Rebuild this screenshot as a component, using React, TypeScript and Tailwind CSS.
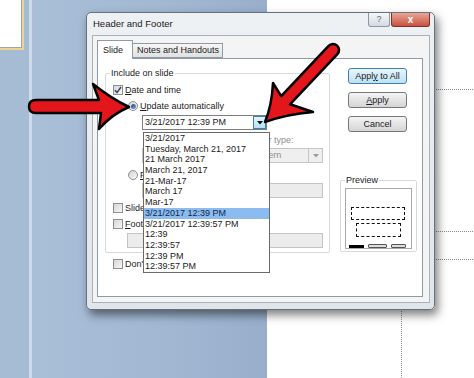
import React from 'react'

function CheckBox({ checked = false }: { checked?: boolean }) {
  return (
    <span className="flex h-[10px] w-[10px] shrink-0 items-center justify-center border border-[#8f8f8f] bg-gradient-to-br from-[#d6d6d6] to-[#f7f7f7]">
      {checked && (
        <svg width="8" height="8" viewBox="0 0 8 8">
          <path d="M1 4.2 L3 6.6 L7 1" fill="none" stroke="#34466a" strokeWidth="1.5" />
        </svg>
      )}
    </span>
  )
}

function Radio({ checked = false }: { checked?: boolean }) {
  return (
    <span className="flex h-[10px] w-[10px] shrink-0 items-center justify-center rounded-full border border-[#8f8f8f] bg-gradient-to-br from-[#d4d4d4] to-[#f8f8f8]">
      {checked && <span className="h-[5px] w-[5px] rounded-full bg-gradient-to-br from-[#1d4a80] to-[#74a8d8]" />}
    </span>
  )
}

function Button({ children, primary = false }: { children: React.ReactNode; primary?: boolean }) {
  return (
    <div
      className={`flex h-[16px] w-[59px] items-center justify-center rounded-[3px] border leading-none ${
        primary ? 'border-[#3c7fb1] bg-gradient-to-b from-[#e8f6fd] to-[#bde1f4]' : 'border-[#777777] bg-gradient-to-b from-[#f4f4f4] to-[#d5d5d5]'
      }`}
    >
      {children}
    </div>
  )
}

const formats = [
  '3/21/2017',
  'Tuesday, March 21, 2017',
  '21 March 2017',
  'March 21, 2017',
  '21-Mar-17',
  'March 17',
  'Mar-17',
  '3/21/2017 12:39 PM',
  '3/21/2017 12:39:57 PM',
  '12:39',
  '12:39:57',
  '12:39 PM',
  '12:39:57 PM',
]

function DateList() {
  return (
    <div className="absolute left-0 top-[16px] z-20 w-[127px] border border-[#6a6a6a] bg-white">
      {formats.map((f, i) => (
        <div key={f} className={`h-[10.7px] whitespace-nowrap pl-[1px] leading-[10.7px] ${i === 7 ? 'bg-[#8cbbef] text-[#10284a]' : ''}`}>
          {f}
        </div>
      ))}
    </div>
  )
}

function IncludeGroup() {
  return (
    <div className="relative flex h-[180px] w-[225px] flex-col rounded-[2px] border border-[#d3dae2] pl-[7px] pt-[11px]">
      <span className="absolute -top-[6px] left-[4px] bg-white px-[1px] leading-[11px]">Include on slide</span>

      <div className="flex h-[10px] items-center gap-[2px]">
        <CheckBox checked />
        <span>
          <span className="underline">D</span>ate and time
        </span>
      </div>

      <div className="mt-[6px] flex h-[10px] items-center gap-[2px] pl-[15px]">
        <Radio checked />
        <span>
          <span className="underline">U</span>pdate automatically
        </span>
      </div>

      <div className="relative ml-[29px] mt-[4px] flex h-[15px] w-[125px] items-center border border-[#7d7d7d] bg-white">
        <span className="pl-[2px]">3/21/2017 12:39 PM</span>
        <span className="ml-auto flex h-[13px] w-[13px] items-center justify-center border border-[#3c7fb1] bg-gradient-to-b from-[#e5f4fc] to-[#b9dff4]">
          <svg width="6" height="4" viewBox="0 0 6 4">
            <path d="M0 0 L6 0 L3 3.5 Z" fill="#111" />
          </svg>
        </span>
        <DateList />
      </div>

      <div className="mt-[5px] flex">
        <div className="ml-[29px] flex w-[90px] flex-col">
          <span className="h-[10px]" />
          <div className="mt-[3px] h-[15px] border border-[#c4c4c4] bg-[#efefef]" />
        </div>
        <div className="ml-[3px] flex flex-col">
          <span className="h-[10px] whitespace-nowrap leading-[10px] text-[#8e8e8e]">Calendar type:</span>
          <div className="ml-[9px] mt-[3px] flex h-[15px] w-[79px] items-center border border-[#c4c4c4] bg-[#efefef]">
            <span className="pl-[3px] text-[#8e8e8e]">Western</span>
            <span className="ml-auto flex h-full w-[14px] items-center justify-center border-l border-[#c4c4c4]">
              <svg width="6" height="4" viewBox="0 0 6 4">
                <path d="M0 0 L6 0 L3 3.5 Z" fill="#9a9a9a" />
              </svg>
            </span>
          </div>
        </div>
      </div>

      <div className="mt-[7px] flex h-[10px] items-center gap-[2px] pl-[15px]">
        <Radio />
        <span>
          <span className="underline">F</span>ixed
        </span>
      </div>

      <div className="ml-[29px] mt-[3px] h-[15px] w-[181px] border border-[#c4c4c4] bg-[#ececec]" />

      <div className="mt-[5px] flex h-[10px] items-center gap-[2px]">
        <CheckBox />
        <span>
          Slide <span className="underline">n</span>umber
        </span>
      </div>

      <div className="mt-[6px] flex h-[10px] items-center gap-[2px]">
        <CheckBox />
        <span>
          <span className="underline">F</span>ooter
        </span>
      </div>

      <div className="ml-[14px] mt-[4px] h-[15px] w-[196px] border border-[#c4c4c4] bg-[#ececec]" />
    </div>
  )
}

function PreviewGroup() {
  return (
    <div className="relative mt-[48px] flex h-[72px] w-[77px] flex-col rounded-[2px] border border-[#d3dae2] pl-[4px] pt-[7px]">
      <span className="absolute -top-[6px] left-[4px] bg-white px-[1px] leading-[11px]">Preview</span>
      <div className="flex h-[61px] w-[67px] flex-col border border-[#a9a9a9] bg-white pt-[18px]">
        <div className="ml-[5px] h-[13px] w-[54px] border border-dashed border-[#111]" />
        <div className="ml-[10px] mt-[3px] h-[14px] w-[45px] border border-dashed border-[#111]" />
        <div className="ml-[3px] mt-[7px] flex items-center gap-[4px]">
          <span className="h-[3px] w-[15px] bg-black" />
          <span className="h-[4px] w-[19px] rounded-[1px] border border-[#555] bg-[#dedede]" />
          <span className="h-[4px] w-[15px] rounded-[1px] border border-[#555] bg-[#dedede]" />
        </div>
      </div>
    </div>
  )
}

function Dialog() {
  return (
    <div className="absolute left-[86px] top-[12px] flex h-[298px] w-[349px] flex-col rounded-[5px] border border-[#66717e] bg-gradient-to-b from-[#eef1f4] to-[#e0e5ea] shadow-[3px_5px_10px_rgba(0,0,0,0.5)]">
      <div className="flex h-[22px] shrink-0 items-start justify-between pl-[6px] pr-[4px]">
        <span className="mt-[5px] text-[9.5px] leading-[12px]">Header and Footer</span>
        <div className="flex gap-[1px]">
          <div className="flex h-[14px] w-[22px] items-center justify-center rounded-b-[3px] border border-t-0 border-[#8c97a4] bg-gradient-to-b from-[#f6f7f9] to-[#d5dbe2] text-[9px] text-[#5a6676]">
            ?
          </div>
          <div className="flex h-[14px] w-[39px] items-center justify-center rounded-b-[3px] border border-t-0 border-[#7e3328] bg-gradient-to-b from-[#e9a597] to-[#c8503f] text-[10px] font-bold text-white">
            x
          </div>
        </div>
      </div>

      <div className="mb-[6px] ml-[5px] mr-[4px] flex flex-1 flex-col border border-[#aab3bd] bg-[#f4f4f4] pb-[5px] pl-[4px] pr-[6px] pt-[4px]">
        <div className="flex h-[18px] shrink-0 items-end">
          <div className="relative z-10 -mb-px flex h-[19px] w-[36px] items-center border border-b-0 border-[#8e9aa6] bg-white pl-[5px]">
            Slide
          </div>
          <div className="flex h-[15px] w-[90px] items-center border border-l-0 border-[#8e9aa6] bg-gradient-to-b from-[#f6f6f6] to-[#e1e1e1] pl-[4px]">
            Notes and Handouts
          </div>
        </div>

        <div className="flex flex-1 border border-[#8e9aa6] bg-white">
          <div className="ml-[7px] mt-[14px] flex flex-col">
            <IncludeGroup />
            <div className="ml-[8px] mt-[6px] flex h-[10px] items-center gap-[2px]">
              <CheckBox />
              <span>
                Don't <span className="underline">s</span>how on title slide
              </span>
            </div>
          </div>
          <div className="ml-[10px] flex flex-col">
            <div className="ml-[8px] mt-[9px] flex flex-col gap-[8px]">
              <Button primary>
                <span>
                  Appl<span className="underline">y</span> to All
                </span>
              </Button>
              <Button>
                <span>
                  <span className="underline">A</span>pply
                </span>
              </Button>
              <Button>Cancel</Button>
            </div>
            <PreviewGroup />
          </div>
        </div>
      </div>
    </div>
  )
}

function Arrows() {
  return (
    <svg className="pointer-events-none absolute left-0 top-0 z-30" width="474" height="378" viewBox="0 0 474 378">
      <path
        d="M36 100 L99 100 L93 84 Q112 99 129 107 Q112 114 99 129 L101 113 L36 113 Q29 113 29 106.5 Q29 100 36 100 Z"
        fill="#e3161c"
        stroke="#000"
        strokeWidth="2.5"
        strokeLinejoin="round"
      />
      <path
        d="M328.6 45.9 L281.2 96.1 L273 83 Q271.9 105.2 265 122 Q286.1 114.3 313 112 L290 104.3 L337.4 54.1 A6 6 0 0 0 328.6 45.9 Z"
        fill="#e3161c"
        stroke="#000"
        strokeWidth="2.5"
        strokeLinejoin="round"
      />
    </svg>
  )
}

export default function App() {
  return (
    <div className="relative flex h-[378px] w-[474px] overflow-hidden bg-white font-['Liberation_Sans',Arial,sans-serif] text-[9px] leading-none text-[#1b1b1b]">
      <div className="flex h-full w-[267px] shrink-0 bg-[#a6bbd4]">
        <div className="w-[29px] shrink-0">
          <div className="h-[50px] w-[24px] border-b-2 border-r-2 border-[#efd48f]">
            <div className="h-full w-full border-b border-r border-[#9ba5b0] bg-white" />
          </div>
        </div>
        <div className="w-[3px] shrink-0 bg-[#cfdbe8]" />
        <div className="flex-1 bg-gradient-to-r from-[#a9bed7] via-[#a3b9d3] to-[#98aecb]" />
      </div>

      <div className="relative flex-1">
        <div className="absolute left-[120px] top-[89px] w-[100px] border-t border-dotted border-[#8a8a8a]" />
        <div className="absolute left-[120px] top-[231px] w-[100px] border-t border-dotted border-[#8a8a8a]" />
        <div className="absolute left-[120px] top-[259px] w-[100px] border-t border-dotted border-[#8a8a8a]" />
        <div className="absolute left-[134px] top-[260px] h-[130px] border-l border-dotted border-[#8a8a8a]" />
      </div>

      <Dialog />
      <Arrows />
    </div>
  )
}
